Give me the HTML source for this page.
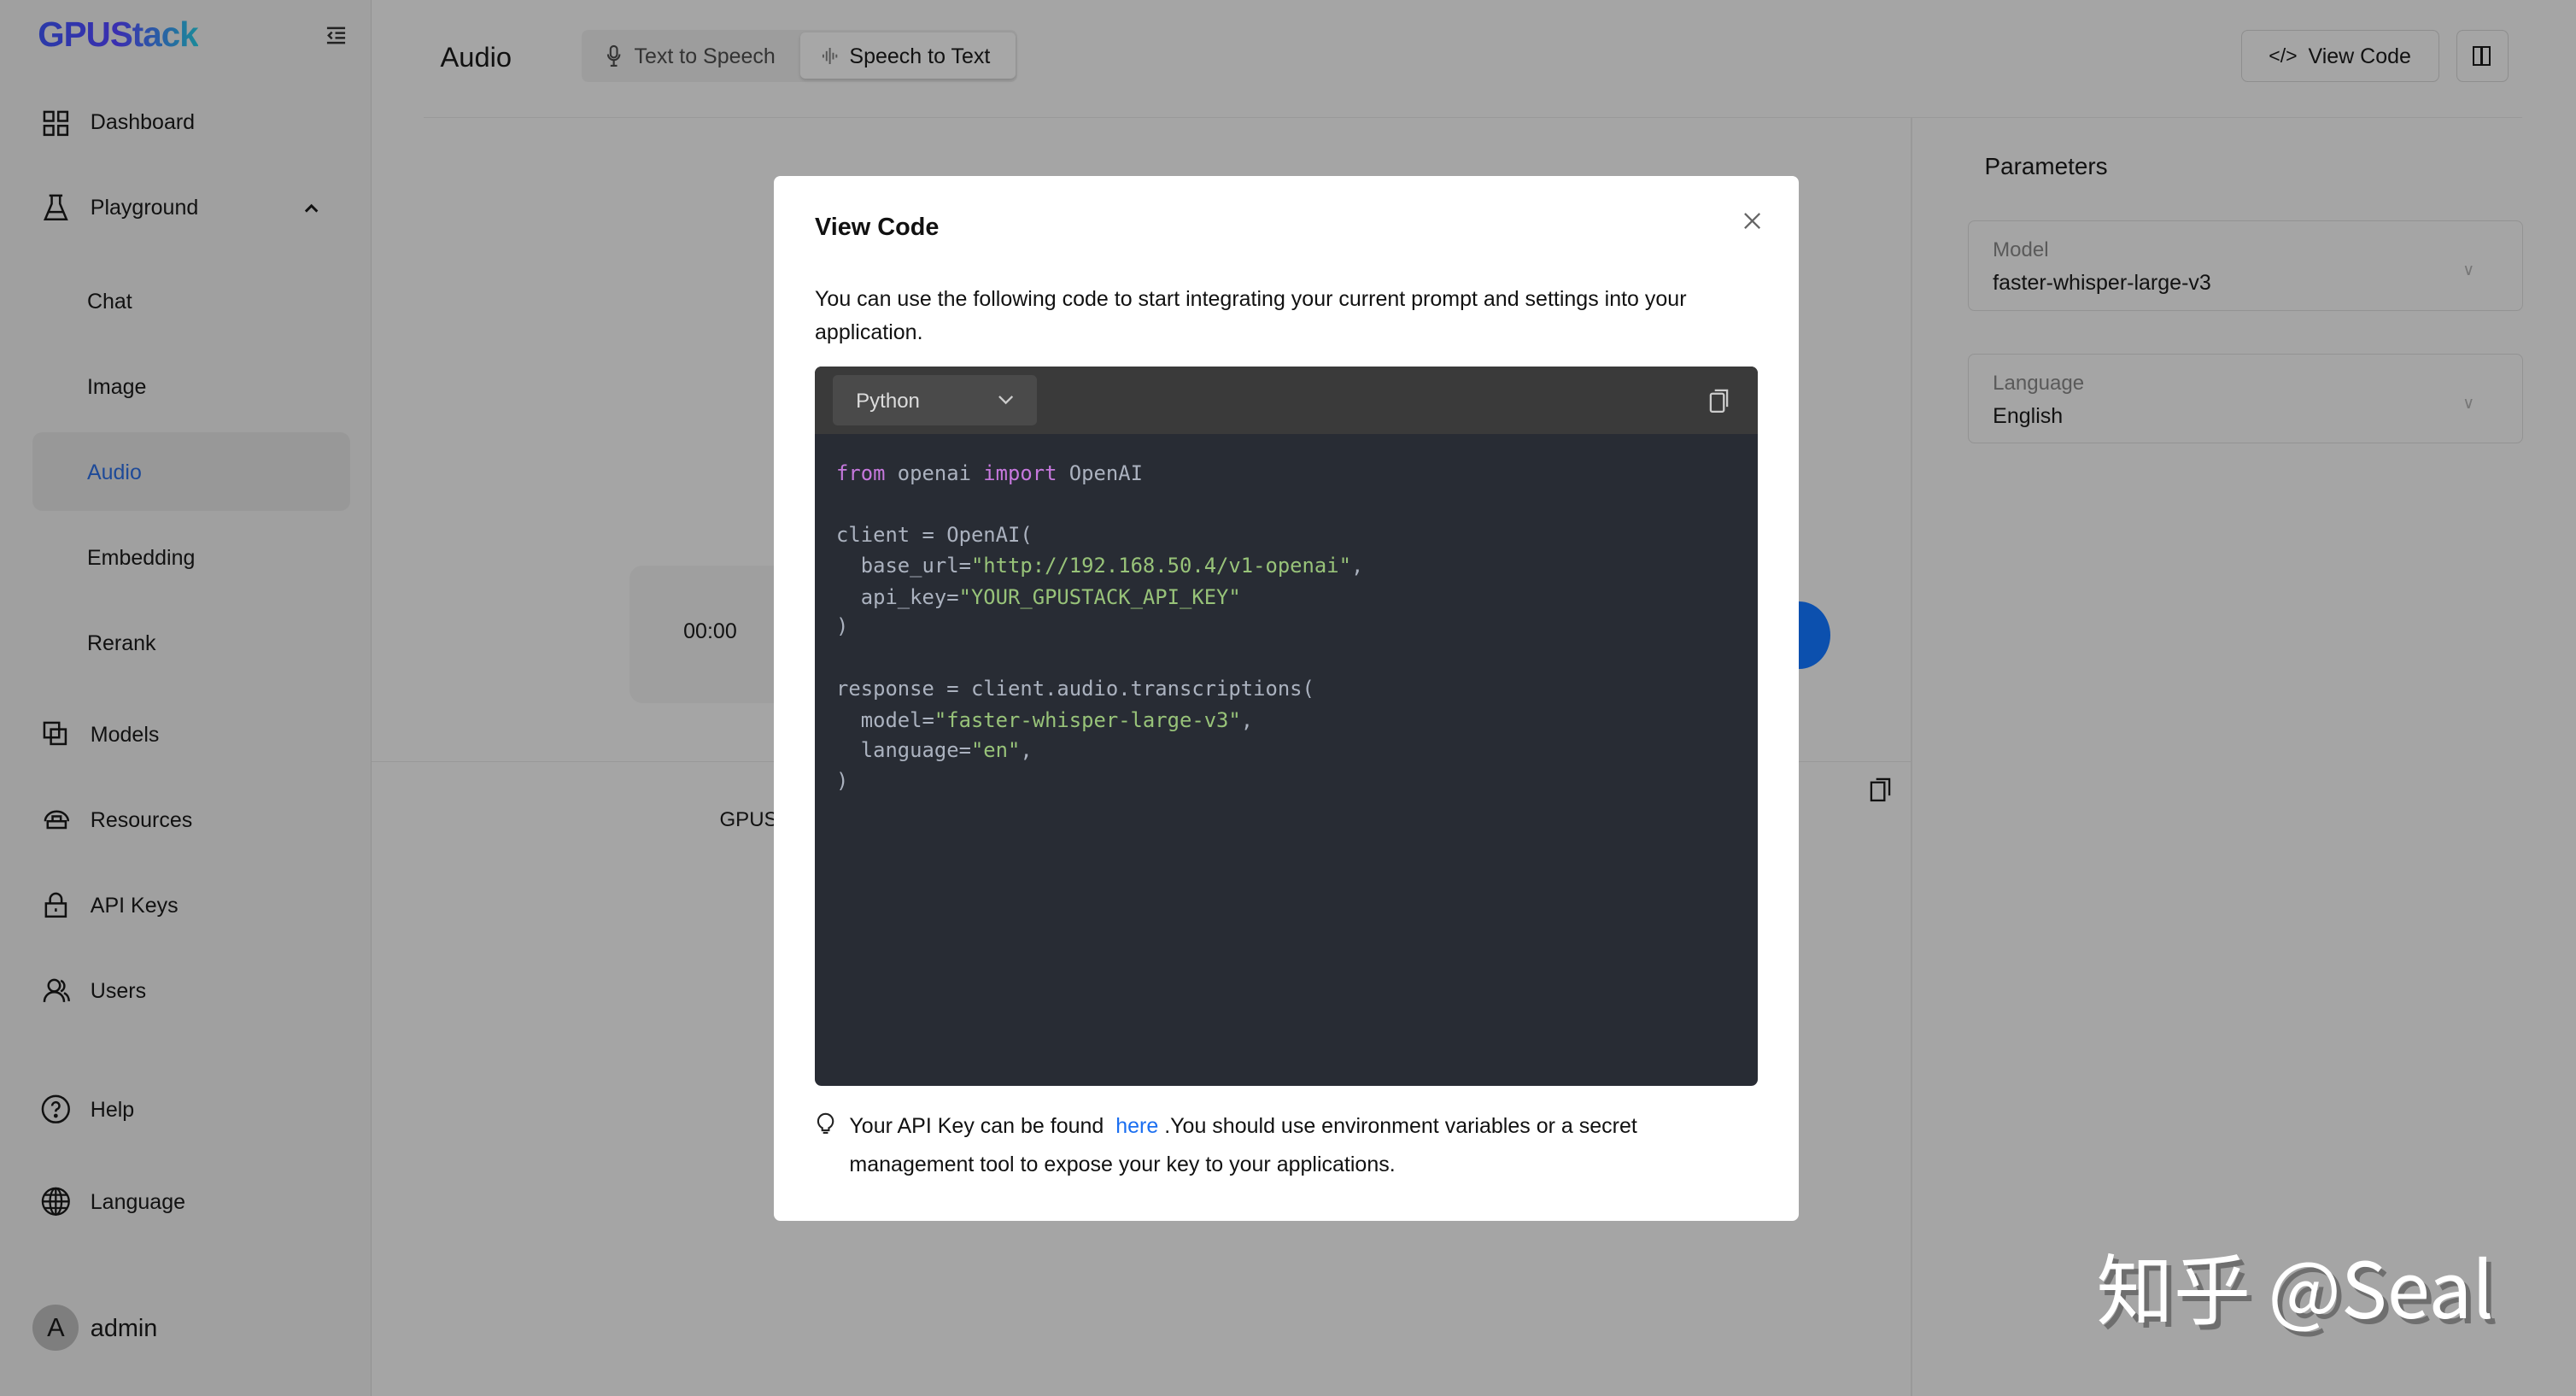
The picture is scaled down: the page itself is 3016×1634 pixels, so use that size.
<!DOCTYPE html>
<html><head><meta charset="utf-8"><style>
*{box-sizing:border-box;margin:0;padding:0}
html,body{width:3016px;height:1634px;overflow:hidden;background:#a5a5a5}
#r{zoom:1.92347;width:1568px;height:850px;position:relative;font-family:"Liberation Sans",sans-serif;color:#111;background:#a5a5a5}
.a{position:absolute}
.nav{position:absolute;left:55px;font-size:13px;color:#111}
.ic{position:absolute;left:26px}
.mono{font-family:"DejaVu Sans Mono","Liberation Mono",monospace}
.code div{position:absolute;left:13px;font-size:12.4px;color:#abb2bf;white-space:pre}
.k{color:#c678dd}.s{color:#98c379}
</style></head><body><div id="r">
<!-- sidebar -->
<div class="a" style="left:0;top:0;width:226px;height:850px;background:#a0a0a0;border-right:1px solid #939393"></div>
<div class="a" style="left:23px;top:9px;font-size:21px;font-weight:bold;letter-spacing:-0.5px;background:linear-gradient(90deg,#2a3aa8,#3a2fb0 50%,#1b8a9a);-webkit-background-clip:text;color:transparent">GPUStack</div>
<svg class="a" style="left:198px;top:15px" width="13" height="13" viewBox="0 0 13 13" fill="none" stroke="#222" stroke-width="1.3"><path d="M1 2h11M6 5h6M6 8h6M1 11h11M4 4.5L2 6.5l2 2"/></svg>
<svg class="ic" style="top:67px" width="16" height="16" viewBox="0 0 16 16" fill="none" stroke="#111" stroke-width="1.3"><rect x="1" y="1" width="5.5" height="5.5"/><rect x="9.5" y="1" width="5.5" height="5.5"/><rect x="1" y="9.5" width="5.5" height="5.5"/><rect x="9.5" y="9.5" width="5.5" height="5.5"/></svg>
<div class="nav" style="top:67px">Dashboard</div>
<svg class="ic" style="top:118px" width="16" height="17" viewBox="0 0 16 17" fill="none" stroke="#111" stroke-width="1.3"><path d="M4 1h8M5.5 1v5L1.5 15.5h13L10.5 6V1M3 11h10"/></svg>
<div class="nav" style="top:119px">Playground</div>
<svg class="a" style="left:185px;top:123px" width="9" height="7" viewBox="0 0 9 7" fill="none" stroke="#111" stroke-width="1.5"><path d="M1 5.5l3.5-3.5 3.5 3.5"/></svg>
<div class="nav" style="left:53px;top:176px">Chat</div>
<div class="nav" style="left:53px;top:228px">Image</div>
<div class="a" style="left:20px;top:263px;width:193px;height:48px;background:#989898;border-radius:6px"></div>
<div class="nav" style="left:53px;top:280px;color:#1e4a98">Audio</div>
<div class="nav" style="left:53px;top:332px">Embedding</div>
<div class="nav" style="left:53px;top:384px">Rerank</div>
<svg class="ic" style="top:439px" width="16" height="16" viewBox="0 0 16 16" fill="none" stroke="#111" stroke-width="1.3"><rect x="1" y="1" width="9" height="9"/><rect x="5" y="5" width="9" height="9"/></svg>
<div class="nav" style="top:440px">Models</div>
<svg class="ic" style="top:491px" width="17" height="16" viewBox="0 0 17 16" fill="none" stroke="#111" stroke-width="1.3"><path d="M1.5 9a7 6 0 0 1 14 0M3 9h11v4H3zM6 9V6h5v3"/></svg>
<div class="nav" style="top:492px">Resources</div>
<svg class="ic" style="top:542px" width="16" height="17" viewBox="0 0 16 17" fill="none" stroke="#111" stroke-width="1.3"><rect x="2" y="7.5" width="12" height="8"/><path d="M4.5 7.5V5a3.5 3.5 0 0 1 7 0v2.5M8 10.5v2"/></svg>
<div class="nav" style="top:544px">API Keys</div>
<svg class="ic" style="top:595px" width="17" height="16" viewBox="0 0 17 16" fill="none" stroke="#111" stroke-width="1.3"><circle cx="7" cy="5" r="3.5"/><path d="M1 15c0-4 3-6 6-6s6 2 6 6M11 2a3.5 3.5 0 0 1 0 6.5M13 9.5c2 1 3 3 3 5"/></svg>
<div class="nav" style="top:596px">Users</div>
<svg class="ic" style="left:25px;top:666px" width="18" height="18" viewBox="0 0 18 18" fill="none" stroke="#111" stroke-width="1.3"><circle cx="9" cy="9" r="8"/><path d="M6.8 7a2.2 2.2 0 1 1 3 2c-.6.3-.8.8-.8 1.5"/><circle cx="9" cy="13" r=".6" fill="#111"/></svg>
<div class="nav" style="top:668px">Help</div>
<svg class="ic" style="left:25px;top:722px" width="18" height="18" viewBox="0 0 18 18" fill="none" stroke="#111" stroke-width="1.2"><circle cx="9" cy="9" r="8"/><ellipse cx="9" cy="9" rx="3.5" ry="8"/><path d="M1 9h16M2 5h14M2 13h14M9 1v16"/></svg>
<div class="nav" style="top:724px">Language</div>
<div class="a" style="left:20px;top:794px;width:28px;height:28px;border-radius:50%;background:#7e7e7e;font-size:16px;text-align:center;line-height:28px">A</div>
<div class="nav" style="top:800px;font-size:15px">admin</div>
<!-- top -->
<div class="a" style="left:268px;top:25px;font-size:17px">Audio</div>
<div class="a" style="left:354px;top:18px;width:265px;height:32px;background:#9d9d9d;border-radius:4px"></div>
<div class="a" style="left:487px;top:20px;width:131px;height:28px;background:#a7a7a7;border-radius:3px;box-shadow:0 1px 2px rgba(0,0,0,.15)"></div>
<svg class="a" style="left:369px;top:27px" width="9" height="14" viewBox="0 0 9 14" fill="none" stroke="#333" stroke-width="1.1"><rect x="2.5" y="1" width="4" height="7" rx="2"/><path d="M1 6a3.5 3.5 0 0 0 7 0M4.5 10v3M2.5 13h4"/></svg>
<div class="a" style="left:386px;top:27px;font-size:13px;color:#333">Text to Speech</div>
<svg class="a" style="left:500px;top:29px" width="10" height="10" viewBox="0 0 10 10" stroke="#555" stroke-width="1"><path d="M1 4v2M3 2v6M5 0v10M7 3v4M9 4v2"/></svg>
<div class="a" style="left:517px;top:27px;font-size:13px">Speech to Text</div>
<div class="a" style="left:258px;top:71px;width:1277px;height:1px;background:#999"></div>
<div class="a" style="left:1364px;top:18px;width:121px;height:32px;border:1px solid #8e8e8e;border-radius:4px"></div>
<div class="a" style="left:1381px;top:27px;font-size:12px">&lt;/&gt;</div>
<div class="a" style="left:1405px;top:27px;font-size:13px">View Code</div>
<div class="a" style="left:1495px;top:18px;width:32px;height:32px;border:1px solid #8e8e8e;border-radius:4px"></div>
<div class="a" style="left:1505px;top:28px;width:11px;height:12px;border:1.3px solid #111"></div>
<div class="a" style="left:1510px;top:28px;width:1.3px;height:12px;background:#111"></div>
<div class="a" style="left:1163px;top:72px;width:1px;height:778px;background:#999"></div>
<div class="a" style="left:1208px;top:93px;font-size:14.5px">Parameters</div>
<div class="a" style="left:1198px;top:134px;width:338px;height:55px;border:1px solid #939393;border-radius:4px"></div>
<div class="a" style="left:1213px;top:145px;font-size:12.5px;color:#5a5a5a">Model</div>
<div class="a" style="left:1213px;top:165px;font-size:13px">faster-whisper-large-v3</div>
<div class="a" style="left:1499px;top:158px;font-size:10px;color:#777">∨</div>
<div class="a" style="left:1198px;top:215px;width:338px;height:55px;border:1px solid #939393;border-radius:4px"></div>
<div class="a" style="left:1213px;top:226px;font-size:12.5px;color:#5a5a5a">Language</div>
<div class="a" style="left:1213px;top:246px;font-size:13px">English</div>
<div class="a" style="left:1499px;top:239px;font-size:10px;color:#777">∨</div>
<div class="a" style="left:383px;top:344px;width:300px;height:84px;background:#9f9f9f;border-radius:8px"></div>
<div class="a" style="left:416px;top:377px;font-size:13px">00:00</div>
<div class="a" style="left:1076px;top:366px;width:38px;height:41px;border-radius:50%;background:#0c50ae"></div>
<div class="a" style="left:226px;top:463px;width:937px;height:1px;background:#999"></div>
<div class="a" style="left:438px;top:492px;font-size:12.5px">GPUS</div>
<svg class="a" style="left:1138px;top:473px" width="13" height="15" viewBox="0 0 13 15" fill="none" stroke="#111" stroke-width="1.2"><rect x="1" y="3" width="8" height="11"/><path d="M4 1h8v10"/></svg>
<!-- modal -->
<div class="a" style="left:471px;top:107px;width:624px;height:636px;background:#fff;border-radius:4px"></div>
<div class="a" style="left:496px;top:130px;font-size:15px;font-weight:bold">View Code</div>
<svg class="a" style="left:1061px;top:129px" width="11" height="11" viewBox="0 0 11 11" stroke="#666" stroke-width="1.2"><path d="M1 1l9 9M10 1l-9 9"/></svg>
<div class="a" style="left:496px;top:172px;width:570px;font-size:13px;line-height:20.5px;color:#111">You can use the following code to start integrating your current prompt and settings into your application.</div>
<div class="a" style="left:496px;top:223px;width:574px;height:438px;background:#282c34;border-radius:4px;overflow:hidden">
<div class="a" style="left:0;top:0;width:574px;height:41px;background:#3a3a3a"></div>
<div class="a" style="left:11px;top:5px;width:124px;height:31px;background:#4a4a4a;border-radius:3px"></div>
<div class="a" style="left:25px;top:14px;font-size:12.5px;color:#ddd">Python</div>
<svg class="a" style="left:111px;top:17px" width="10" height="7" viewBox="0 0 10 7" fill="none" stroke="#ccc" stroke-width="1.2"><path d="M1 1l4 4 4-4"/></svg>
<svg class="a" style="left:544px;top:13px" width="13" height="16" viewBox="0 0 13 16" fill="none" stroke="#ccc" stroke-width="1.2"><rect x="1.5" y="3.5" width="8" height="11" rx="1"/><path d="M4 1.5h7.5v10"/></svg>
<div class="code mono">
<div style="top:58px"><span class="k">from</span> openai <span class="k">import</span> OpenAI</div>
<div style="top:95px">client = OpenAI(</div>
<div style="top:114px">  base_url=<span class="s">"http://192.168.50.4/v1-openai"</span>,</div>
<div style="top:133px">  api_key=<span class="s">"YOUR_GPUSTACK_API_KEY"</span></div>
<div style="top:151px">)</div>
<div style="top:189px">response = client.audio.transcriptions(</div>
<div style="top:208px">  model=<span class="s">"faster-whisper-large-v3"</span>,</div>
<div style="top:226px">  language=<span class="s">"en"</span>,</div>
<div style="top:245px">)</div>
</div></div>
<svg class="a" style="left:497px;top:676px" width="11" height="14" viewBox="0 0 11 14" fill="none" stroke="#222" stroke-width="1.1"><path d="M3.5 10.5a4.5 4.5 0 1 1 4 0V12h-4zM4 13.5h3"/></svg>
<div class="a" style="left:517px;top:674px;width:540px;font-size:13px;line-height:23px">Your API Key can be found &nbsp;<span style="color:#1a6ef0">here</span> .You should use environment variables or a secret management tool to expose your key to your applications.</div>
<!-- watermark -->
<div class="a" style="left:1276px;top:748px;font-size:47px;color:#fff;font-family:'Noto Sans CJK SC',sans-serif;text-shadow:3px 3px 0 #6e6e6e;white-space:nowrap">知乎 @Seal</div>
</div></body></html>
